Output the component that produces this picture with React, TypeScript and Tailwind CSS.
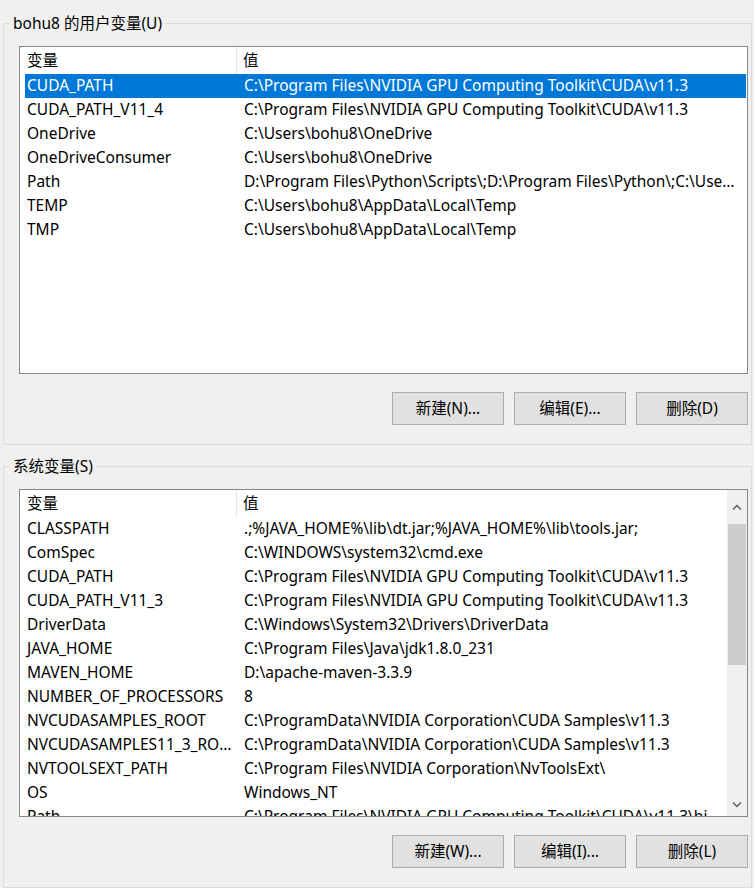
const userVars: [string, string][] = [
  ["CUDA_PATH", "C:\\Program Files\\NVIDIA GPU Computing Toolkit\\CUDA\\v11.3"],
  ["CUDA_PATH_V11_4", "C:\\Program Files\\NVIDIA GPU Computing Toolkit\\CUDA\\v11.3"],
  ["OneDrive", "C:\\Users\\bohu8\\OneDrive"],
  ["OneDriveConsumer", "C:\\Users\\bohu8\\OneDrive"],
  ["Path", "D:\\Program Files\\Python\\Scripts\\;D:\\Program Files\\Python\\;C:\\Users\\bohu8\\AppData\\Local\\Microsoft\\WindowsApps;"],
  ["TEMP", "C:\\Users\\bohu8\\AppData\\Local\\Temp"],
  ["TMP", "C:\\Users\\bohu8\\AppData\\Local\\Temp"],
];

const sysVars: [string, string][] = [
  ["CLASSPATH", ".;%JAVA_HOME%\\lib\\dt.jar;%JAVA_HOME%\\lib\\tools.jar;"],
  ["ComSpec", "C:\\WINDOWS\\system32\\cmd.exe"],
  ["CUDA_PATH", "C:\\Program Files\\NVIDIA GPU Computing Toolkit\\CUDA\\v11.3"],
  ["CUDA_PATH_V11_3", "C:\\Program Files\\NVIDIA GPU Computing Toolkit\\CUDA\\v11.3"],
  ["DriverData", "C:\\Windows\\System32\\Drivers\\DriverData"],
  ["JAVA_HOME", "C:\\Program Files\\Java\\jdk1.8.0_231"],
  ["MAVEN_HOME", "D:\\apache-maven-3.3.9"],
  ["NUMBER_OF_PROCESSORS", "8"],
  ["NVCUDASAMPLES_ROOT", "C:\\ProgramData\\NVIDIA Corporation\\CUDA Samples\\v11.3"],
  ["NVCUDASAMPLES11_3_ROOT", "C:\\ProgramData\\NVIDIA Corporation\\CUDA Samples\\v11.3"],
  ["NVTOOLSEXT_PATH", "C:\\Program Files\\NVIDIA Corporation\\NvToolsExt\\"],
  ["OS", "Windows_NT"],
  ["Path", "C:\\Program Files\\NVIDIA GPU Computing Toolkit\\CUDA\\v11.3\\bin;C:\\Program Files"],
];

function Rows({ rows, selected }: { rows: [string, string][]; selected?: number }) {
  return (
    <div className="flex flex-col">
      {rows.map(([name, value], i) => (
        <div
          key={name + i}
          className={
            "ml-[5px] mr-[1px] flex h-[24px] shrink-0 items-center " +
            (i === selected ? "bg-[#0078d7] text-white" : "text-black")
          }
        >
          <div className="w-[217px] shrink-0 truncate pl-[2px] pr-[3px]">{name}</div>
          <div className="min-w-0 flex-1 truncate pl-[2px] pr-[6px]">{value}</div>
        </div>
      ))}
    </div>
  );
}

function Header() {
  return (
    <div className="flex h-[27px] shrink-0 items-center">
      <div className="flex h-full w-[217px] items-center border-r border-[#e5e5e5] pl-[7px]">变量</div>
      <div className="pl-[6px]">值</div>
    </div>
  );
}

function Buttons({ labels }: { labels: string[] }) {
  return (
    <div className="mt-[18px] flex justify-end gap-[10px]">
      {labels.map((l) => (
        <button
          key={l}
          className="h-[33px] w-[112px] border border-[#adadad] bg-[#e1e1e1] text-black"
        >
          {l}
        </button>
      ))}
    </div>
  );
}

function Group({ title, children }: { title: string; children: React.ReactNode }) {
  return (
    <div className="relative ml-[3px] mr-[2px] h-[422px] border border-[#dcdcdc] pl-[15px] pr-[3px] pt-[22px]">
      <span className="absolute -top-[12px] left-[6px] bg-[#f0f0f0] px-[3px] leading-[22px]">{title}</span>
      {children}
    </div>
  );
}

export default function App() {
  return (
    <div
      className="h-[888px] w-[754px] overflow-hidden bg-[#f0f0f0] pt-[23px] text-[15.5px] text-black"
      style={{ fontFamily: '"Noto Sans", "Noto Sans CJK SC", sans-serif' }}
    >
      <Group title="bohu8 的用户变量(U)">
        <div className="flex h-[328px] flex-col overflow-hidden border border-[#828790] bg-white">
          <Header />
          <Rows rows={userVars} selected={0} />
        </div>
        <Buttons labels={["新建(N)...", "编辑(E)...", "删除(D)"]} />
      </Group>

      <div className="h-[21px]" />

      <Group title="系统变量(S)">
        <div className="flex h-[328px] overflow-hidden border border-[#828790] bg-white">
          <div className="flex min-w-0 flex-1 flex-col">
            <Header />
            <Rows rows={sysVars} />
          </div>
          <div className="flex w-[20px] shrink-0 flex-col bg-[#f0f0f0]">
            <div className="flex h-[34px] items-center justify-center">
              <svg width="10" height="6" viewBox="0 0 10 6" fill="none" stroke="#606060" strokeWidth="1.5">
                <path d="M1 5.5 L5 1.5 L9 5.5" />
              </svg>
            </div>
            <div className="mx-[1px] h-[141px] bg-[#cdcdcd]" />
            <div className="flex-1" />
            <div className="flex h-[22px] items-center justify-center">
              <svg width="10" height="6" viewBox="0 0 10 6" fill="none" stroke="#606060" strokeWidth="1.5">
                <path d="M1 0.5 L5 4.5 L9 0.5" />
              </svg>
            </div>
          </div>
        </div>
        <Buttons labels={["新建(W)...", "编辑(I)...", "删除(L)"]} />
      </Group>
    </div>
  );
}
